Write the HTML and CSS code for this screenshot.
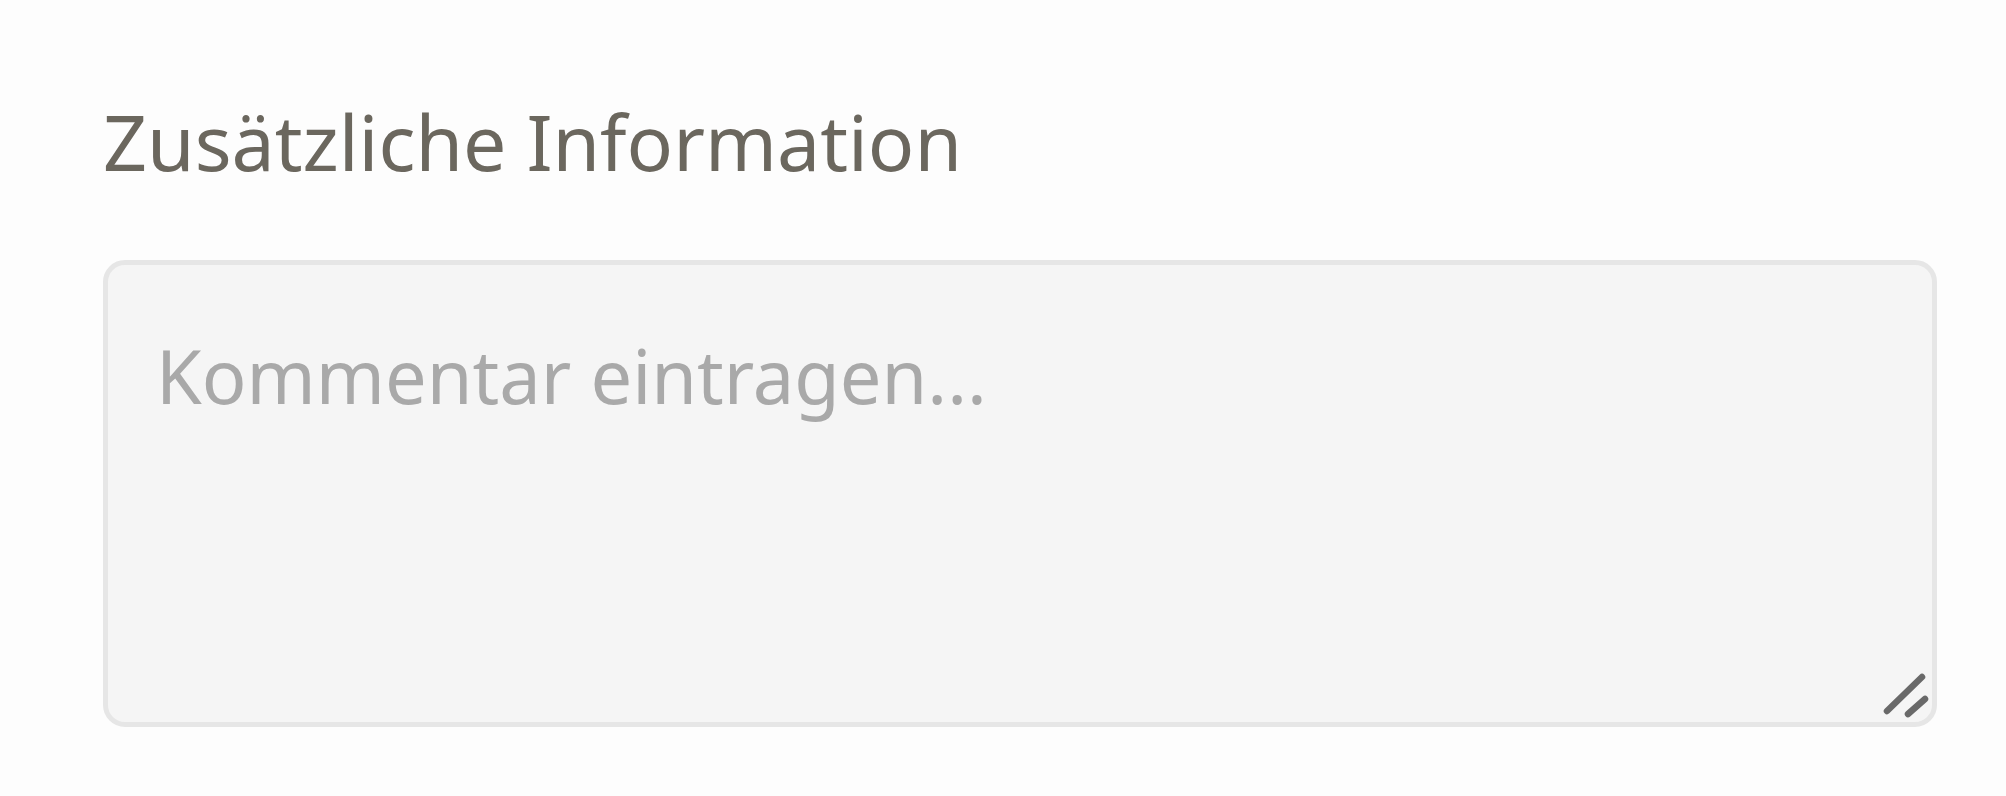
FILE: index.html
```html
<!DOCTYPE html>
<html lang="de">

<head>
  <meta charset="UTF-8">
  <meta name="viewport" content="width=device-width, initial-scale=1.0">
  <title>Zusätzliche Information</title>
  <link rel="stylesheet" href="styles.css">
</head>

<body>
  <div class="info-section">
    <h1>Zusätzliche Information</h1>
    <div class="comment-box">
      <textarea class="comment-field" placeholder="Kommentar eintragen..."></textarea>
      
      <svg class="grip" width="60" height="60" viewBox="0 0 60 60">
        <line x1="10" y1="44" x2="45" y2="10" />
        <line x1="31" y1="47" x2="48" y2="32" />
      </svg>
    </div>
  </div>
</body>

</html>
```

FILE: styles.css
```css
* {
  margin: 0;
  padding: 0;
  box-sizing: border-box;
}

body {
  font-family: 'Noto Sans', sans-serif;
  background-color: #fdfdfd;
}

.info-section {
  padding: 92px 69px 0 103px;
}

h1 {
  font-size: 77px;
  line-height: 100px;
  font-weight: 400;
  color: #6b675e;
  margin-bottom: 68px;
}

.comment-box {
  position: relative;
  height: 467px;
}

.comment-field {
  display: block;
  width: 100%;
  height: 100%;
  font-family: 'Noto Sans', sans-serif;
  font-size: 74px;
  line-height: 100px;
  color: #555;
  background-color: #f5f5f5;
  border: 5px solid #e6e6e6;
  border-radius: 22px;
  padding: 61px 48px;
  resize: none;
  outline: none;
}

.comment-field::placeholder {
  color: #a9a9a9;
}

.grip {
  position: absolute;
  right: 0;
  bottom: 0;
}

.grip line {
  stroke: #5a5a5a;
  stroke-width: 6.5;
  stroke-linecap: round;
  opacity: 0.9;
}
```
